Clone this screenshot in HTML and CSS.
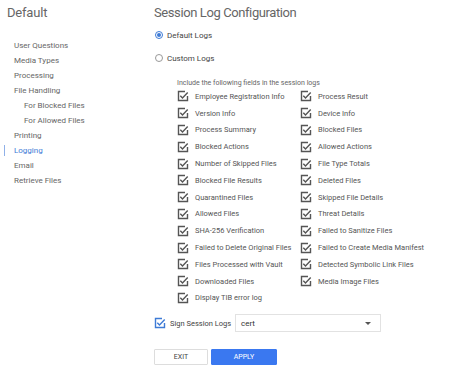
FILE: index.html
```html
<!DOCTYPE html>
<html lang="en">

<head>
    <meta charset="UTF-8">
    <meta name="viewport" content="width=device-width, initial-scale=1.0">
    <title>Session Log Configuration</title>
    <link rel="stylesheet" href="styles.css">
</head>

<body>
    <div class="page">
        <div class="sidebar">
            <h2 class="side-title">Default</h2>
            <ul class="nav">
                <li>User Questions</li>
                <li>Media Types</li>
                <li>Processing</li>
                <li>File Handling</li>
                <li class="sub">For Blocked Files</li>
                <li class="sub">For Allowed Files</li>
                <li>Printing</li>
                <li class="active">Logging</li>
                <li>Email</li>
                <li>Retrieve Files</li>
            </ul>
        </div>

        <div class="main">
            <h1 class="title">Session Log Configuration</h1>

            <label class="radio-row">
                <span class="radio checked"></span>Default Logs
            </label>
            <label class="radio-row">
                <span class="radio"></span>Custom Logs
            </label>

            <div class="fields">
                <p class="hint">Include the following fields in the session logs</p>
                <div class="grid">
                    <div class="item"><svg class="cb" viewBox="0 0 12 12"><path d="M8 1.5H1.5v9h9V6"/><path d="M3.3 5.8l2.2 2.2 5.2-5.6"/></svg>Employee Registration Info</div>
                    <div class="item"><svg class="cb" viewBox="0 0 12 12"><path d="M8 1.5H1.5v9h9V6"/><path d="M3.3 5.8l2.2 2.2 5.2-5.6"/></svg>Process Result</div>
                    <div class="item"><svg class="cb" viewBox="0 0 12 12"><path d="M8 1.5H1.5v9h9V6"/><path d="M3.3 5.8l2.2 2.2 5.2-5.6"/></svg>Version Info</div>
                    <div class="item"><svg class="cb" viewBox="0 0 12 12"><path d="M8 1.5H1.5v9h9V6"/><path d="M3.3 5.8l2.2 2.2 5.2-5.6"/></svg>Device Info</div>
                    <div class="item"><svg class="cb" viewBox="0 0 12 12"><path d="M8 1.5H1.5v9h9V6"/><path d="M3.3 5.8l2.2 2.2 5.2-5.6"/></svg>Process Summary</div>
                    <div class="item"><svg class="cb" viewBox="0 0 12 12"><path d="M8 1.5H1.5v9h9V6"/><path d="M3.3 5.8l2.2 2.2 5.2-5.6"/></svg>Blocked Files</div>
                    <div class="item"><svg class="cb" viewBox="0 0 12 12"><path d="M8 1.5H1.5v9h9V6"/><path d="M3.3 5.8l2.2 2.2 5.2-5.6"/></svg>Blocked Actions</div>
                    <div class="item"><svg class="cb" viewBox="0 0 12 12"><path d="M8 1.5H1.5v9h9V6"/><path d="M3.3 5.8l2.2 2.2 5.2-5.6"/></svg>Allowed Actions</div>
                    <div class="item"><svg class="cb" viewBox="0 0 12 12"><path d="M8 1.5H1.5v9h9V6"/><path d="M3.3 5.8l2.2 2.2 5.2-5.6"/></svg>Number of Skipped Files</div>
                    <div class="item"><svg class="cb" viewBox="0 0 12 12"><path d="M8 1.5H1.5v9h9V6"/><path d="M3.3 5.8l2.2 2.2 5.2-5.6"/></svg>File Type Totals</div>
                    <div class="item"><svg class="cb" viewBox="0 0 12 12"><path d="M8 1.5H1.5v9h9V6"/><path d="M3.3 5.8l2.2 2.2 5.2-5.6"/></svg>Blocked File Results</div>
                    <div class="item"><svg class="cb" viewBox="0 0 12 12"><path d="M8 1.5H1.5v9h9V6"/><path d="M3.3 5.8l2.2 2.2 5.2-5.6"/></svg>Deleted Files</div>
                    <div class="item"><svg class="cb" viewBox="0 0 12 12"><path d="M8 1.5H1.5v9h9V6"/><path d="M3.3 5.8l2.2 2.2 5.2-5.6"/></svg>Quarantined Files</div>
                    <div class="item"><svg class="cb" viewBox="0 0 12 12"><path d="M8 1.5H1.5v9h9V6"/><path d="M3.3 5.8l2.2 2.2 5.2-5.6"/></svg>Skipped File Details</div>
                    <div class="item"><svg class="cb" viewBox="0 0 12 12"><path d="M8 1.5H1.5v9h9V6"/><path d="M3.3 5.8l2.2 2.2 5.2-5.6"/></svg>Allowed Files</div>
                    <div class="item"><svg class="cb" viewBox="0 0 12 12"><path d="M8 1.5H1.5v9h9V6"/><path d="M3.3 5.8l2.2 2.2 5.2-5.6"/></svg>Threat Details</div>
                    <div class="item"><svg class="cb" viewBox="0 0 12 12"><path d="M8 1.5H1.5v9h9V6"/><path d="M3.3 5.8l2.2 2.2 5.2-5.6"/></svg>SHA-256 Verification</div>
                    <div class="item"><svg class="cb" viewBox="0 0 12 12"><path d="M8 1.5H1.5v9h9V6"/><path d="M3.3 5.8l2.2 2.2 5.2-5.6"/></svg>Failed to Sanitize Files</div>
                    <div class="item"><svg class="cb" viewBox="0 0 12 12"><path d="M8 1.5H1.5v9h9V6"/><path d="M3.3 5.8l2.2 2.2 5.2-5.6"/></svg>Failed to Delete Original Files</div>
                    <div class="item"><svg class="cb" viewBox="0 0 12 12"><path d="M8 1.5H1.5v9h9V6"/><path d="M3.3 5.8l2.2 2.2 5.2-5.6"/></svg>Failed to Create Media Manifest</div>
                    <div class="item"><svg class="cb" viewBox="0 0 12 12"><path d="M8 1.5H1.5v9h9V6"/><path d="M3.3 5.8l2.2 2.2 5.2-5.6"/></svg>Files Processed with Vault</div>
                    <div class="item"><svg class="cb" viewBox="0 0 12 12"><path d="M8 1.5H1.5v9h9V6"/><path d="M3.3 5.8l2.2 2.2 5.2-5.6"/></svg>Detected Symbolic Link Files</div>
                    <div class="item"><svg class="cb" viewBox="0 0 12 12"><path d="M8 1.5H1.5v9h9V6"/><path d="M3.3 5.8l2.2 2.2 5.2-5.6"/></svg>Downloaded Files</div>
                    <div class="item"><svg class="cb" viewBox="0 0 12 12"><path d="M8 1.5H1.5v9h9V6"/><path d="M3.3 5.8l2.2 2.2 5.2-5.6"/></svg>Media Image Files</div>
                    <div class="item"><svg class="cb" viewBox="0 0 12 12"><path d="M8 1.5H1.5v9h9V6"/><path d="M3.3 5.8l2.2 2.2 5.2-5.6"/></svg>Display TIB error log</div>
                </div>
            </div>

            <div class="sign-row">
                <label class="sign">
                    <svg class="cb blue" viewBox="0 0 12 12"><path d="M8 1.5H1.5v9h9V6"/><path d="M3.3 5.8l2.2 2.2 5.2-5.6"/></svg>Sign Session Logs
                </label>
                <div class="select">
                    <span>cert</span>
                    <span class="arrow"></span>
                </div>
            </div>

            <div class="buttons">
                <button class="btn exit">EXIT</button>
                <button class="btn apply">APPLY</button>
            </div>
        </div>
    </div>
</body>

</html>
```

FILE: styles.css
```css
* {
    margin: 0;
    padding: 0;
    box-sizing: border-box;
}

body {
    background-color: #fff;
    font-family: Roboto, "Noto Sans", sans-serif;
    color: #555;
}

.page {
    display: flex;
}

/* left menu */
.sidebar {
    width: 154px;
    padding-top: 3px;
}

.side-title {
    font-size: 13px;
    font-weight: 400;
    letter-spacing: -0.2px;
    color: #666;
    padding-left: 7px;
    line-height: 20px;
}

.nav {
    list-style: none;
    margin-top: 15px;
    font-size: 8px;
}

.nav li {
    height: 15px;
    line-height: 15px;
    padding-left: 14px;
    color: #666;
}

.nav li.sub {
    padding-left: 24px;
}

.nav li.active {
    color: #3e7bd6;
    position: relative;
}

.nav li.active::before {
    content: '';
    position: absolute;
    left: 4px;
    top: 2px;
    width: 1px;
    height: 11px;
    background-color: #8fb0e8;
}

/* main panel */
.main {
    flex: 1;
    padding-top: 3px;
}

.title {
    font-size: 13px;
    font-weight: 400;
    letter-spacing: -0.4px;
    color: #666;
    line-height: 20px;
}

.radio-row {
    display: flex;
    align-items: center;
    font-size: 8px;
    color: #444;
    height: 14px;
    margin-top: 5px;
    margin-left: 1px;
}

.radio-row + .radio-row {
    margin-top: 9px;
}

.radio {
    width: 8px;
    height: 8px;
    border: 1px solid #999;
    border-radius: 50%;
    margin-right: 4px;
    position: relative;
}

.radio.checked {
    border-color: #3e7bd6;
}

.radio.checked::after {
    content: '';
    position: absolute;
    left: 1px;
    top: 1px;
    width: 4px;
    height: 4px;
    border-radius: 50%;
    background-color: #3e7bd6;
}

.fields {
    padding-left: 23px;
    margin-top: 13px;
}

.hint {
    font-size: 7px;
    color: #666;
    line-height: 10px;
}

.grid {
    display: grid;
    grid-template-columns: 123px 150px;
    grid-auto-rows: 16.8px;
    margin-top: 0;
}

.item {
    display: flex;
    align-items: center;
    font-size: 7.5px;
    color: #555;
    white-space: nowrap;
}

.cb {
    width: 12px;
    height: 12px;
    margin-right: 6px;
    fill: none;
    stroke: #555;
    stroke-width: 1.4;
}

.cb.blue {
    stroke: #3e7bd6;
}

.sign-row {
    display: flex;
    align-items: center;
    margin-top: 8px;
}

.sign {
    display: flex;
    align-items: center;
    font-size: 7.5px;
    color: #444;
    width: 81px;
    white-space: nowrap;
}

.sign .cb {
    margin-right: 4px;
}

.select {
    width: 146px;
    height: 18px;
    border: 1px solid #e2e2e2;
    display: flex;
    align-items: center;
    justify-content: space-between;
    padding: 0 9px 0 5px;
    font-size: 8px;
    color: #333;
}

.arrow {
    width: 0;
    height: 0;
    border-left: 3px solid transparent;
    border-right: 3px solid transparent;
    border-top: 3px solid #555;
}

.buttons {
    display: flex;
    gap: 3px;
    margin-top: 17px;
}

.btn {
    height: 16px;
    font-family: Roboto, sans-serif;
    font-size: 7px;
    cursor: pointer;
    border-radius: 1px;
}

.exit {
    width: 54px;
    background-color: #fff;
    border: 1px solid #ddd;
    color: #444;
}

.apply {
    width: 66px;
    background-color: #3a78f0;
    border: 1px solid #3a78f0;
    color: #fff;
}
```
